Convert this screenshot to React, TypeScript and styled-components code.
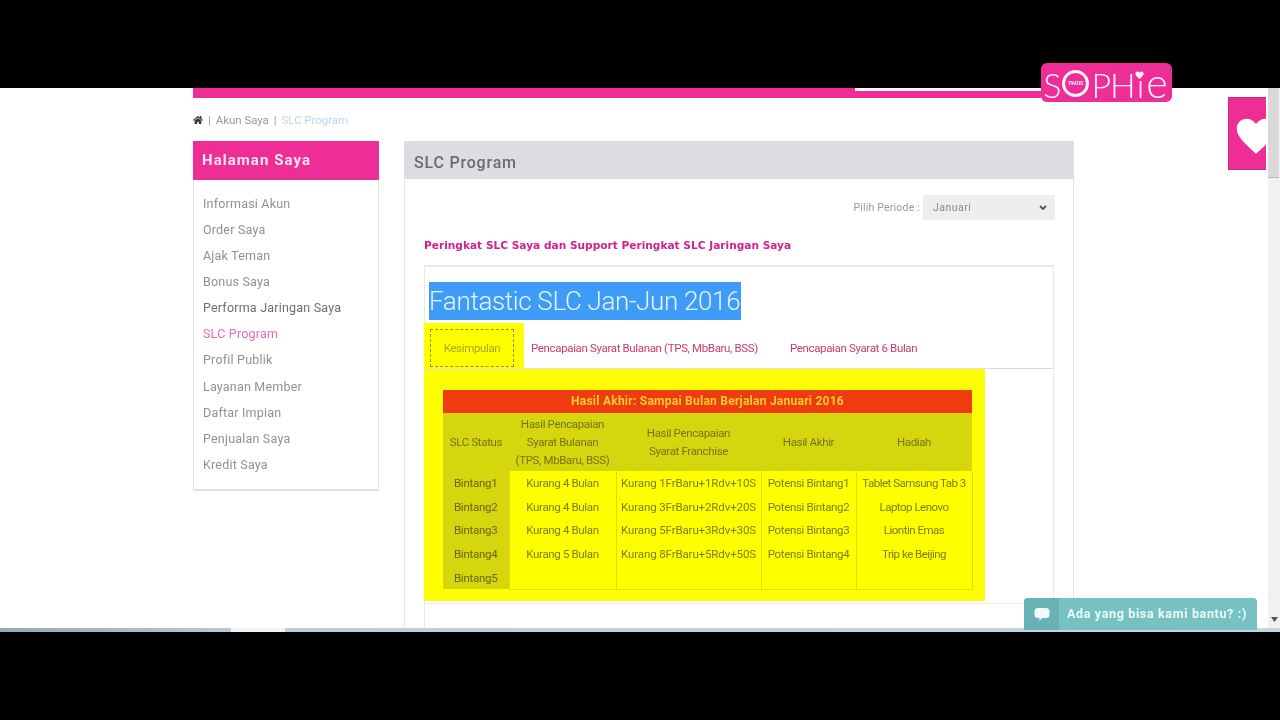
import React from "react";
import styled, { createGlobalStyle } from "styled-components";
import { FaHome } from "react-icons/fa";

const Global = createGlobalStyle`
  html, body { margin: 0; padding: 0; background: #000; overflow: hidden; }
  * { box-sizing: border-box; }
`;

const Screen = styled.div`
  position: relative;
  width: 1280px;
  height: 720px;
  background: #000;
  overflow: hidden;
  display: flex;
  flex-direction: column;
  font-family: "Roboto", "Liberation Sans", sans-serif;
  filter: blur(0.55px);
`;
const TopBlack = styled.div`
  height: 88px;
  flex: none;
`;
const Browser = styled.div`
  height: 540px;
  flex: none;
  display: flex;
  background: #fff;
  overflow: hidden;
`;
const BottomStrip = styled.div`
  height: 4px;
  flex: none;
  display: flex;
  padding-left: 231px;
  background: linear-gradient(90deg, #93a8b6, #bccdd9 20%, #c5d6e2);
`;
const TaskTab = styled.div`
  width: 54px;
  background: #f2f5f7;
`;
const Page = styled.div`
  flex: 1;
  padding-left: 193px;
  overflow: hidden;
`;
const Stripe = styled.div`
  display: flex;
  width: 848px;
  height: 10px;
  background: #ee2d96;
`;
const StripeLine = styled.div`
  margin-left: 662px;
  flex: 1;
  height: 3px;
  background: #fdf6fa;
`;
const Crumbs = styled.div`
  height: 43px;
  display: flex;
  align-items: center;
  gap: 5px;
  font-size: 11.5px;
  letter-spacing: -0.05px;
  color: #9a9a9a;
`;
const CrumbIcon = styled(FaHome)`
  width: 10px;
  height: 10px;
  color: #333;
`;
const CrumbCurrent = styled.span`
  color: #bcd6e8;
`;
const Columns = styled.div`
  display: flex;
  align-items: flex-start;
  gap: 25px;
`;
const Sidebar = styled.aside`
  width: 186px;
  flex: none;
  border: 1px solid #e2e2e6;
  border-top: 0;
  border-bottom-width: 2px;
  padding-bottom: 11px;
`;
const SideTitle = styled.h2`
  margin: 0 -1px;
  height: 39px;
  padding: 0 0 2px 9px;
  display: flex;
  align-items: center;
  background: #ee2d96;
  color: #fbe6f2;
  font-size: 15px;
  font-weight: 700;
  letter-spacing: 1.05px;
`;
const SideList = styled.ul`
  list-style: none;
  margin: 10px 0 0;
  padding: 0 0 0 9px;
`;
const SideItem = styled.li<{ $tone?: "active" | "hover" }>`
  height: 26.15px;
  display: flex;
  align-items: center;
  font-size: 12.5px;
  letter-spacing: 0.2px;
  color: ${(p) => (p.$tone === "active" ? "#e46cb4" : p.$tone === "hover" ? "#6e6e6e" : "#919191")};
`;
const Main = styled.main`
  width: 670px;
  flex: none;
`;
const MainTitle = styled.h1`
  margin: 0;
  height: 38px;
  padding: 4px 0 0 10px;
  display: flex;
  align-items: center;
  background: #dcdce3;
  color: #6a6a70;
  font-size: 16px;
  font-weight: 500;
  letter-spacing: 0.8px;
`;
const MainBody = styled.div`
  border-left: 1px solid #e6e6ea;
  border-right: 1px solid #e6e6ea;
  padding: 16px 0 0 19px;
  height: 460px;
`;
const FilterRow = styled.div`
  display: flex;
  justify-content: flex-end;
  align-items: center;
  gap: 3px;
  padding-right: 18px;
  font-size: 10.5px;
  letter-spacing: 0.2px;
  color: #9a9a9a;
`;
const SelectBox = styled.div`
  width: 132px;
  height: 25px;
  padding: 0 8px 0 10px;
  display: flex;
  justify-content: space-between;
  align-items: center;
  background: #eeeeee;
  color: #8a8a8a;
  letter-spacing: 0.5px;
`;
const Chevron = styled.svg`
  width: 8px;
  height: 6px;
  color: #555;
`;
const Heading = styled.h3`
  margin: 17px 0 11px;
  height: 17px;
  line-height: 17px;
  font-family: "DejaVu Sans", sans-serif;
  font-size: 10.6px;
  font-weight: 700;
  letter-spacing: 0;
  color: #d0218f;
`;
const Box = styled.section`
  width: 630px;
  border: 1px solid #e8e8ec;
  border-top-width: 2px;
  border-bottom: 0;
`;
const SelTitle = styled.div`
  display: inline-block;
  margin: 15px 0 0 4px;
  height: 38px;
  line-height: 38px;
  width: 312px;
  white-space: nowrap;
  background: #3f9bf8;
  color: #e2f6fb;
  font-size: 26px;
  font-weight: 300;
  letter-spacing: -0.35px;
`;
const TabRow = styled.div`
  margin: 3px 0 0 -1px;
  display: flex;
  align-items: stretch;
  height: 45px;
`;
const ActiveTab = styled.div`
  width: 100px;
  padding: 6px 10px 0 6px;
  background: #ffff00;
`;
const ActiveTabInner = styled.div`
  height: 38px;
  display: flex;
  align-items: center;
  justify-content: center;
  border: 1px dashed #8f8f14;
  font-size: 11.5px;
  letter-spacing: -0.35px;
  color: #a6a414;
`;
const Tab = styled.div<{ $gap: number }>`
  margin-left: ${(p) => p.$gap}px;
  padding-top: 5px;
  display: flex;
  align-items: center;
  font-size: 11.5px;
  letter-spacing: -0.35px;
  color: #cf3a6c;
  white-space: nowrap;
`;
const PanelFrame = styled.div`
  border-top: 1px solid #dcdcdc;
  margin-left: -1px;
`;
const YellowPanel = styled.div`
  width: 561px;
  height: 232px;
  background: #ffff00;
  padding: 21px 13px 0 19px;
`;
const ResultTable = styled.table`
  width: 529px;
  border-collapse: collapse;
  table-layout: fixed;
  font-size: 11.5px;
  text-align: center;
`;
const TitleCell = styled.th`
  height: 23px;
  padding: 0 0 2px;
  background: #f03a10;
  color: #ffce28;
  font-size: 12px;
  font-weight: 700;
  letter-spacing: 0.25px;
`;
const HeadCell = styled.th`
  height: 58px;
  padding: 0;
  background: #d6d60e;
  font-weight: 400;
  line-height: 18px;
  letter-spacing: -0.35px;
  color: #74740e;
`;
const StatusCell = styled.td`
  height: 23.7px;
  padding: 0;
  background: #d6d60e;
  letter-spacing: -0.25px;
  color: #66660c;
`;
const BodyCell = styled.td`
  padding: 0;
  border-left: 1px solid #dcdc0a;
  border-right: 1px solid #dcdc0a;
  white-space: nowrap;
  letter-spacing: -0.35px;
  color: #7c7c0c;
  &:nth-child(3) {
    letter-spacing: -0.12px;
  }
  &:nth-child(5) {
    letter-spacing: -0.5px;
  }
  tr:last-child > & {
    border-bottom: 1px solid #e0e00a;
  }
`;
const Cells = styled.tr``;
const BelowPanel = styled.div`
  margin-top: 2px;
  height: 60px;
  border-top: 1px solid #ececf0;
`;
const Scrollbar = styled.div`
  width: 12px;
  flex: none;
  display: flex;
  flex-direction: column;
  background: #f1f1f1;
`;
const Thumb = styled.div`
  height: 90px;
  margin-right: 1px;
  background: #d9d9d9;
  border-bottom: 1px solid #b9b9b9;
`;
const ScrollSpace = styled.div`
  flex: 1;
`;
const ScrollArrow = styled.svg`
  width: 7px;
  height: 5px;
  margin: 0 0 6px 3px;
  color: #555;
`;
const LogoBadge = styled.div`
  position: absolute;
  left: 1041px;
  top: 63px;
  width: 131px;
  height: 39px;
  padding-right: 3px;
  border-radius: 6px;
  background: #ee2d96;
  color: #fdf4f9;
  display: flex;
  align-items: baseline;
  justify-content: center;
  font-family: "Lato", sans-serif;
  font-weight: 300;
  font-size: 34px;
  line-height: 39px;
  letter-spacing: -1px;
`;
const LogoO = styled.span`
  position: relative;
  align-self: center;
  display: inline-block;
  flex: none;
  width: 27px;
  height: 27px;
  margin: 1px 2px 0 2px;
  border: 3px solid #fdf4f9;
  border-radius: 50%;
`;
const LogoParis = styled.span`
  position: absolute;
  inset: 0;
  display: flex;
  align-items: center;
  justify-content: center;
  font-family: "Liberation Sans", sans-serif;
  font-weight: 700;
  font-size: 5px;
  letter-spacing: 0;
  line-height: 1;
`;
const LogoLetterI = styled.span`
  position: relative;
  display: inline-block;
  margin: 0 3px 0 2px;
`;
const LogoHeart = styled.svg`
  position: absolute;
  left: 50%;
  top: 6px;
  width: 9px;
  height: 9px;
  margin-left: -5px;
  background: #ee2d96;
`;
const LogoE = styled.span`
  font-size: 41px;
  line-height: 39px;
`;
const HeartTab = styled.div`
  position: absolute;
  left: 1228px;
  top: 97px;
  width: 38px;
  height: 73px;
  background: #ee2d96;
  border: 1px solid #c42a7e;
  border-right: 0;
  overflow: hidden;
`;
const HeartIcon = styled.svg`
  position: absolute;
  left: 5px;
  top: 18px;
  width: 44px;
  height: 42px;
  color: #fff;
`;
const Chat = styled.div`
  position: absolute;
  left: 1024px;
  top: 598px;
  width: 233px;
  height: 32px;
  display: flex;
  border-radius: 4px 4px 0 0;
  overflow: hidden;
  background: #76c2c3;
  color: #eefafa;
  font-size: 12.5px;
  font-weight: 700;
  letter-spacing: 0.65px;
`;
const ChatIconWrap = styled.div`
  width: 35px;
  flex: none;
  display: flex;
  align-items: center;
  justify-content: center;
  background: #66b2b4;
`;
const ChatIcon = styled.svg`
  width: 16px;
  height: 15px;
  color: #f2fbfb;
`;
const ChatLabel = styled.div`
  padding: 0 0 2px 8px;
  display: flex;
  align-items: center;
  white-space: nowrap;
`;

const sideItems: { label: string; tone?: "active" | "hover" }[] = [
  { label: "Informasi Akun" },
  { label: "Order Saya" },
  { label: "Ajak Teman" },
  { label: "Bonus Saya" },
  { label: "Performa Jaringan Saya", tone: "hover" },
  { label: "SLC Program", tone: "active" },
  { label: "Profil Publik" },
  { label: "Layanan Member" },
  { label: "Daftar Impian" },
  { label: "Penjualan Saya" },
  { label: "Kredit Saya" },
];

const rows = [
  ["Bintang1", "Kurang 4 Bulan", "Kurang 1FrBaru+1Rdv+10S", "Potensi Bintang1", "Tablet Samsung Tab 3"],
  ["Bintang2", "Kurang 4 Bulan", "Kurang 3FrBaru+2Rdv+20S", "Potensi Bintang2", "Laptop Lenovo"],
  ["Bintang3", "Kurang 4 Bulan", "Kurang 5FrBaru+3Rdv+30S", "Potensi Bintang3", "Liontin Emas"],
  ["Bintang4", "Kurang 5 Bulan", "Kurang 8FrBaru+5Rdv+50S", "Potensi Bintang4", "Trip ke Beijing"],
  ["Bintang5", "", "", "", ""],
];

const heartPath =
  "M12 21.5C5.5 15.8 1 11.8 1 7.2 1 3.8 3.6 1.5 6.6 1.5c2.1 0 4.1 1.1 5.4 3 1.3-1.9 3.3-3 5.4-3 3 0 5.6 2.3 5.6 5.7 0 4.6-4.5 8.6-11 14.3z";

export default function App() {
  return (
    <Screen>
      <Global />
      <TopBlack />
      <Browser>
        <Page>
          <Stripe>
            <StripeLine />
          </Stripe>
          <Crumbs>
            <CrumbIcon />
            <span>|</span>
            <span>Akun Saya</span>
            <span>|</span>
            <CrumbCurrent>SLC Program</CrumbCurrent>
          </Crumbs>
          <Columns>
            <Sidebar>
              <SideTitle>Halaman Saya</SideTitle>
              <SideList>
                {sideItems.map((it) => (
                  <SideItem key={it.label} $tone={it.tone}>
                    {it.label}
                  </SideItem>
                ))}
              </SideList>
            </Sidebar>
            <Main>
              <MainTitle>SLC Program</MainTitle>
              <MainBody>
                <FilterRow>
                  <span>Pilih Periode :</span>
                  <SelectBox>
                    <span>Januari</span>
                    <Chevron viewBox="0 0 8 6">
                      <path d="M1 1l3 3 3-3" fill="none" stroke="currentColor" strokeWidth="1.8" />
                    </Chevron>
                  </SelectBox>
                </FilterRow>
                <Heading>Peringkat SLC Saya dan Support Peringkat SLC Jaringan Saya</Heading>
                <Box>
                  <SelTitle>Fantastic SLC Jan-Jun 2016</SelTitle>
                  <TabRow>
                    <ActiveTab>
                      <ActiveTabInner>Kesimpulan</ActiveTabInner>
                    </ActiveTab>
                    <Tab $gap={7}>Pencapaian Syarat Bulanan (TPS, MbBaru, BSS)</Tab>
                    <Tab $gap={32}>Pencapaian Syarat 6 Bulan</Tab>
                  </TabRow>
                  <PanelFrame>
                    <YellowPanel>
                      <ResultTable>
                        <colgroup>
                          <col width="66" />
                          <col width="107" />
                          <col width="145" />
                          <col width="95" />
                          <col width="116" />
                        </colgroup>
                        <thead>
                          <Cells>
                            <TitleCell colSpan={5}>Hasil Akhir: Sampai Bulan Berjalan Januari 2016</TitleCell>
                          </Cells>
                          <Cells>
                            <HeadCell>SLC Status</HeadCell>
                            <HeadCell>
                              Hasil Pencapaian
                              <br />
                              Syarat Bulanan
                              <br />
                              (TPS, MbBaru, BSS)
                            </HeadCell>
                            <HeadCell>
                              Hasil Pencapaian
                              <br />
                              Syarat Franchise
                            </HeadCell>
                            <HeadCell>Hasil Akhir</HeadCell>
                            <HeadCell>Hadiah</HeadCell>
                          </Cells>
                        </thead>
                        <tbody>
                          {rows.map((r) => (
                            <Cells key={r[0]}>
                              <StatusCell>{r[0]}</StatusCell>
                              {r.slice(1).map((c, i) => (
                                <BodyCell key={i}>{c}</BodyCell>
                              ))}
                            </Cells>
                          ))}
                        </tbody>
                      </ResultTable>
                    </YellowPanel>
                    <BelowPanel />
                  </PanelFrame>
                </Box>
              </MainBody>
            </Main>
          </Columns>
        </Page>
        <Scrollbar>
          <Thumb />
          <ScrollSpace />
          <ScrollArrow viewBox="0 0 7 5">
            <path d="M0 0h7L3.5 5z" fill="currentColor" />
          </ScrollArrow>
        </Scrollbar>
      </Browser>
      <BottomStrip>
        <TaskTab />
      </BottomStrip>

      <LogoBadge>
        S
        <LogoO>
          <LogoParis>PARIS</LogoParis>
        </LogoO>
        PH
        <LogoLetterI>
          i
          <LogoHeart viewBox="0 0 24 24">
            <path d={heartPath} fill="#fdf4f9" />
          </LogoHeart>
        </LogoLetterI>
        <LogoE>e</LogoE>
      </LogoBadge>
      <HeartTab>
        <HeartIcon viewBox="0 0 24 24">
          <path d={heartPath} fill="currentColor" />
        </HeartIcon>
      </HeartTab>
      <Chat>
        <ChatIconWrap>
          <ChatIcon viewBox="0 0 16 15">
            <path
              d="M4 1h8a3.500 3.500 0 0 1 3.500 3.500v3A3.500 3.500 0 0 1 12 11H8l-2.500 3v-3H4A3.500 3.500 0 0 1 .5 7.500v-3A3.500 3.500 0 0 1 4 1z"
              fill="currentColor"
            />
          </ChatIcon>
        </ChatIconWrap>
        <ChatLabel>Ada yang bisa kami bantu? :)</ChatLabel>
      </Chat>
    </Screen>
  );
}
